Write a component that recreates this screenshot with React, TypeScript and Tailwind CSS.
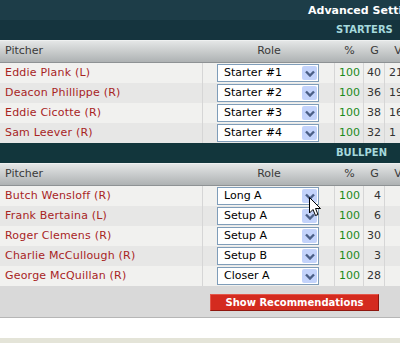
const starters = [
  { name: 'Eddie Plank (L)', role: 'Starter #1', pct: '100', g: '40', v: '21' },
  { name: 'Deacon Phillippe (R)', role: 'Starter #2', pct: '100', g: '36', v: '19' },
  { name: 'Eddie Cicotte (R)', role: 'Starter #3', pct: '100', g: '38', v: '16' },
  { name: 'Sam Leever (R)', role: 'Starter #4', pct: '100', g: '32', v: '1' },
]

const bullpen = [
  { name: 'Butch Wensloff (R)', role: 'Long A', pct: '100', g: '4', v: '' },
  { name: 'Frank Bertaina (L)', role: 'Setup A', pct: '100', g: '6', v: '' },
  { name: 'Roger Clemens (R)', role: 'Setup A', pct: '100', g: '30', v: '' },
  { name: 'Charlie McCullough (R)', role: 'Setup B', pct: '100', g: '3', v: '' },
  { name: 'George McQuillan (R)', role: 'Closer A', pct: '100', g: '28', v: '' },
]

type Pitcher = (typeof starters)[number]

function SectionBar({ label, tall }: { label: string; tall?: boolean }) {
  return (
    <div
      className={`${tall ? 'bg-[#15343e]' : 'bg-[#12363c]'} h-[20px] pl-[336px] text-[10px] leading-[20px] font-bold text-[#a6d9dc]`}
    >
      {label}
    </div>
  )
}

function HeaderRow() {
  return (
    <div className="grid h-[23px] grid-cols-[203px_132px_29px_21px_26px_19px] items-center border-t border-[#eef0f0] border-b border-b-[#8e9294] bg-gradient-to-b from-[#e4e6e6] to-[#aeb2b3] text-[#3a3a3a]">
      <div className="pl-[5px]">Pitcher</div>
      <div className="text-center">Role</div>
      <div className="text-center">%</div>
      <div className="text-center">G</div>
      <div className="text-center">V</div>
      <div />
    </div>
  )
}

function Chevron() {
  return (
    <svg width="10" height="7" viewBox="0 0 10 7" className="block">
      <path d="M1 1.5 L5 5.5 L9 1.5" fill="none" stroke="#4b5f86" strokeWidth="2.4" />
    </svg>
  )
}

function RoleSelect({ value }: { value: string }) {
  return (
    <div className="ml-[14px] flex h-[18px] w-[102px] items-center justify-between border border-[#7f9db9] bg-white pl-[6px] pr-[1px] text-black">
      <span>{value}</span>
      <span className="flex h-[14px] w-[15px] items-center justify-center rounded-[2px] bg-[#c3d3fb]">
        <Chevron />
      </span>
    </div>
  )
}

function Row({ p, i }: { p: Pitcher; i: number }) {
  const bg = i % 2 === 0 ? 'bg-[#f1f1ef]' : 'bg-[#e7e7e6]'
  return (
    <div className={`grid h-[20px] grid-cols-[203px_132px_29px_21px_26px_19px] items-center ${bg}`}>
      <div className="flex h-full items-center border-r border-[#d6d6d6] pl-[5px] tracking-[0.2px] text-[#a8241f]">{p.name}</div>
      <div className="flex h-full items-center border-r border-[#d6d6d6]">
        <RoleSelect value={p.role} />
      </div>
      <div className="flex h-full items-center justify-end border-r border-[#d6d6d6] pr-[3px] text-[#1c8a1c]">{p.pct}</div>
      <div className="flex h-full items-center justify-end border-r border-[#d6d6d6] pr-[3px] text-[#333]">{p.g}</div>
      <div className="flex h-full items-center pl-[4px] text-[#333]">{p.v}</div>
      <div />
    </div>
  )
}

function Cursor() {
  return (
    <svg
      width="13"
      height="21"
      viewBox="0 0 13 21"
      className="absolute left-[309px] top-[197px]"
    >
      <path
        d="M0.5 0.5 L0.5 16 L4 12.5 L6.5 18.5 L9 17.5 L6.5 11.5 L11.5 11.5 Z"
        fill="#fff"
        stroke="#000"
        strokeWidth="1"
        strokeLinejoin="miter"
      />
    </svg>
  )
}

export default function App() {
  return (
    <div className="relative h-[343px] w-[400px] overflow-hidden bg-white font-['DejaVu_Sans',Verdana,sans-serif] text-[11px]">
      <div className="w-[430px]">
        <div className="h-[20px] whitespace-nowrap bg-[#1d3d48] pl-[308px] leading-[21px] font-bold text-white">
          Advanced Settings
        </div>
        <SectionBar label="STARTERS" tall />
        <HeaderRow />
        {starters.map((p, i) => (
          <Row key={p.name} p={p} i={i} />
        ))}
        <SectionBar label="BULLPEN" />
        <HeaderRow />
        {bullpen.map((p, i) => (
          <Row key={p.name} p={p} i={i} />
        ))}
        <div className="h-[32px] border-b border-[#b6b6b6] bg-[#d9d9d9] pt-[8px]">
          <button className="ml-[210px] h-[17px] w-[169px] border border-t-[#e4564a] border-l-[#e4564a] border-r-[#8e160e] border-b-[#8e160e] bg-[#d42b1f] text-[10px] leading-[15px] font-bold text-white">
            Show Recommendations
          </button>
        </div>
        <div className="h-[20px] bg-white" />
        <div className="h-[10px] bg-[#e4e4d8]" />
      </div>
      <Cursor />
    </div>
  )
}
